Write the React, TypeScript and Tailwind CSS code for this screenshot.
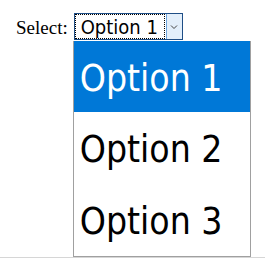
import React from 'react'

const options = ['Option 1', 'Option 2', 'Option 3']

export default function App() {
  const selected = 0

  return (
    <div className="h-[258px] w-[265px] border-b border-[#d6d6d6] bg-white">
      <div className="flex items-start pl-[16px] pt-[13px]">
        {/* Label */}
        <span className="mr-[6px] mt-[5px] font-['Liberation_Serif',serif] text-[19px] leading-[20px] text-black">
          Select:
        </span>

        {/* Select box */}
        <div className="relative">
          <div className="flex h-[27px] w-[109px] border border-[#1f4e86] bg-white">
            <div className="flex flex-1 items-center border border-dotted border-black pl-[5px] font-['DejaVu_Sans_Condensed','DejaVu_Sans',sans-serif] text-[20px] leading-none text-black">
              {options[selected]}
            </div>
            <div className="ml-px flex w-[16px] items-center justify-center border-l border-[#6fa6dc] bg-[#e3effb]">
              <svg className="h-[6px] w-[8px]" viewBox="0 0 8 6" fill="none" stroke="#444" strokeWidth="1">
                <path d="M1 1.5l3 3 3-3" />
              </svg>
            </div>
          </div>

          {/* Dropdown list */}
          <div className="absolute left-[-1px] top-[28px] w-[178px] border-x border-b border-[#a0a0a0] bg-white font-['DejaVu_Sans_Condensed','DejaVu_Sans',sans-serif] text-[37px]">
            {options.map((opt, i) => (
              <div
                key={opt}
                className={
                  i === selected
                    ? 'flex h-[71px] items-center bg-[#0078d7] pl-[6px] pt-[4px] text-white'
                    : 'flex h-[72px] items-center pl-[6px] pt-[4px] text-black'
                }
              >
                {opt}
              </div>
            ))}
          </div>
        </div>
      </div>
    </div>
  )
}
